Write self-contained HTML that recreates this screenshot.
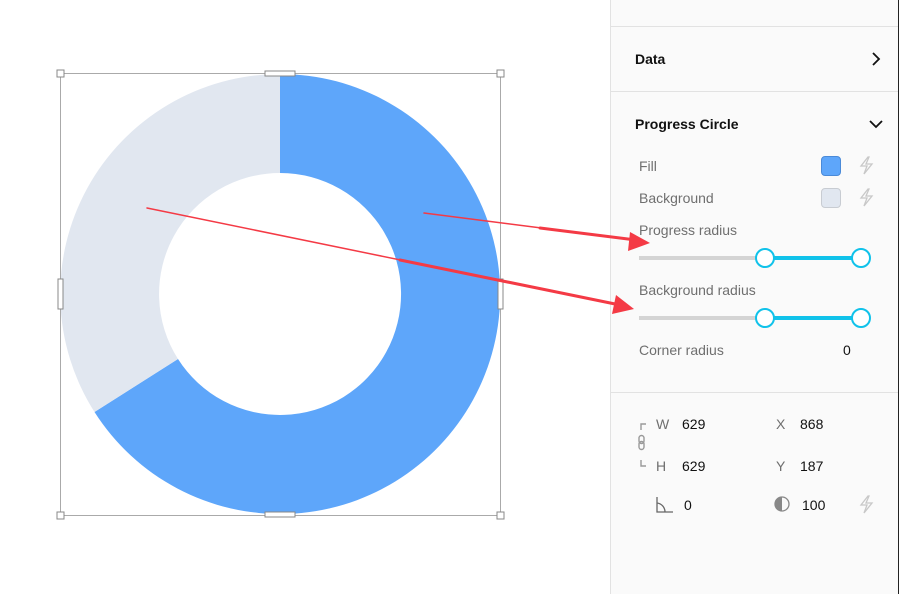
<!DOCTYPE html>
<html><head><style>
body{margin:0;width:899px;height:594px;overflow:hidden;background:#fff;font-family:"Liberation Sans",sans-serif;position:relative}
.p{position:absolute;left:610px;top:0;width:287px;height:594px;background:#fafafa;border-left:1px solid #e2e2e2;border-right:1px solid #222}
.t{position:absolute;font-size:14px;color:#6f6f6f}
.b{position:absolute;font-size:14px;color:#111}
.h{position:absolute;font-size:14px;font-weight:bold;color:#111}
.sep{position:absolute;left:0;width:287px;height:1px;background:#e2e2e2}
</style></head><body>
<svg width="610" height="594" style="position:absolute;left:0;top:0">
<path d="M280 74 A220 220 0 1 1 94.5 412 L178 359 A121 121 0 1 0 280 173 Z" fill="#5ea6fa"/>
<path d="M94.5 412 A220 220 0 0 1 280 74 L280 173 A121 121 0 0 0 178 359 Z" fill="#e1e7f0"/>
<rect x="60.5" y="73.5" width="440" height="442" fill="none" stroke="#aaa"/>
<g fill="#fff" stroke="#888">
<rect x="57" y="70" width="7" height="7"/><rect x="497" y="70" width="7" height="7"/>
<rect x="57" y="512" width="7" height="7"/><rect x="497" y="512" width="7" height="7"/>
<rect x="265" y="71" width="30" height="5"/><rect x="265" y="512" width="30" height="5"/>
<rect x="58" y="279" width="5" height="30"/><rect x="498" y="279" width="5" height="30"/>
</g>
</svg>
<div class="p">
<div class="sep" style="top:26px"></div>
<div class="h" style="left:24px;top:51px">Data</div>
<svg style="position:absolute;left:260px;top:52px" width="10" height="14"><path d="M2 1l6 6-6 6" fill="none" stroke="#111" stroke-width="1.8"/></svg>
<div class="sep" style="top:91px"></div>
<div class="h" style="left:24px;top:116px">Progress Circle</div>
<svg style="position:absolute;left:258px;top:119px" width="14" height="10"><path d="M1 2l6 6 6-6" fill="none" stroke="#111" stroke-width="1.8"/></svg>
<div class="t" style="left:28px;top:158px">Fill</div>
<div style="position:absolute;left:210px;top:156px;width:18px;height:18px;border-radius:4px;background:#5ea6fa;border:1px solid #4a8ad8"></div>
<div class="t" style="left:28px;top:190px">Background</div>
<div style="position:absolute;left:210px;top:188px;width:18px;height:18px;border-radius:4px;background:#e1e7f0;border:1px solid #c8ccd2"></div>
<svg style="position:absolute;left:246px;top:155px" width="18" height="56"><g fill="none" stroke="#c8c8c8" stroke-width="1.3"><path d="M11 2L4 11h6l-3 8 8-10H9l3-7z"/><path d="M11 34L4 43h6l-3 8 8-10H9l3-7z"/></g></svg>
<div class="t" style="left:28px;top:222px">Progress radius</div>
<div class="t" style="left:28px;top:282px">Background radius</div>
<svg style="position:absolute;left:26px;top:246px" width="240" height="84">
<g stroke-width="4"><line x1="2" y1="12" x2="128" y2="12" stroke="#d4d4d4"/><line x1="128" y1="12" x2="224" y2="12" stroke="#10c2ea"/>
<line x1="2" y1="72" x2="128" y2="72" stroke="#d4d4d4"/><line x1="128" y1="72" x2="224" y2="72" stroke="#10c2ea"/></g>
<g fill="#fff" stroke="#10c2ea" stroke-width="2"><circle cx="128" cy="12" r="9"/><circle cx="224" cy="12" r="9"/><circle cx="128" cy="72" r="9"/><circle cx="224" cy="72" r="9"/></g>
</svg>
<div class="t" style="left:28px;top:342px">Corner radius</div>
<div class="b" style="left:232px;top:342px">0</div>
<div class="sep" style="top:392px"></div>
<svg style="position:absolute;left:24px;top:420px" width="14" height="50"><g fill="none" stroke="#999" stroke-width="1.4"><path d="M6 10V4h5"/><path d="M6 40v6h5"/><path d="M4 18a2.5 2.5 0 0 1 5 0v3a2.5 2.5 0 0 1-5 0z"/><path d="M4 24a2.5 2.5 0 0 1 5 0v3a2.5 2.5 0 0 1-5 0z"/></g></svg>
<div class="t" style="left:45px;top:416px">W</div><div class="b" style="left:71px;top:416px">629</div>
<div class="t" style="left:45px;top:458px">H</div><div class="b" style="left:71px;top:458px">629</div>
<div class="t" style="left:165px;top:416px">X</div><div class="b" style="left:189px;top:416px">868</div>
<div class="t" style="left:165px;top:458px">Y</div><div class="b" style="left:189px;top:458px">187</div>
<svg style="position:absolute;left:44px;top:495px" width="20" height="20"><path d="M2 2v15h16M2 8a9 9 0 0 1 8 9" fill="none" stroke="#666" stroke-width="1.3"/></svg>
<div class="b" style="left:73px;top:497px">0</div>
<svg style="position:absolute;left:163px;top:496px" width="18" height="18"><circle cx="8" cy="8" r="7" fill="none" stroke="#888" stroke-width="1.3"/><path d="M8 1a7 7 0 0 0 0 14z" fill="#888"/></svg>
<div class="b" style="left:191px;top:497px">100</div>
<svg style="position:absolute;left:246px;top:494px" width="18" height="22"><path d="M11 2L4 11h6l-3 8 8-10H9l3-7z" fill="none" stroke="#c8c8c8" stroke-width="1.3"/></svg>
</div>
<svg width="899" height="594" style="position:absolute;left:0;top:0">
<g stroke="#f43a45" fill="#f43a45" stroke-linecap="round">
<path d="M424 213 L636 240" stroke-width="1.5"/><path d="M540 228 L636 240" stroke-width="3"/><path d="M650 243L630 232 628 251Z" stroke="none"/>
<path d="M147 208 L620 305" stroke-width="1.5"/><path d="M400 260 L620 305" stroke-width="3"/><path d="M634 309L616 295 612 314Z" stroke="none"/>
</g></svg>
</body></html>
